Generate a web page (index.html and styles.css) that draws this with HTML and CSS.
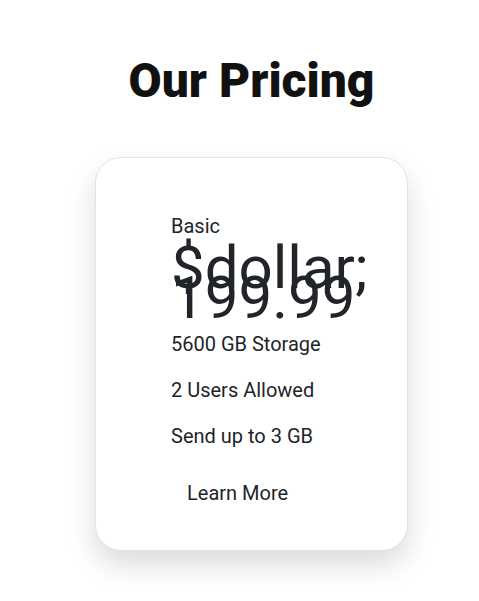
FILE: index.html
```html
<!DOCTYPE html>
<html lang="en">
<head>
<meta charset="utf-8">
<title>Our Pricing</title>
<link rel="stylesheet" href="styles.css">
</head>
<body>
<main class="pricing">
  <h1 class="pricing-title">Our Pricing</h1>
  <div class="plan-card">
    <p class="plan-name">Basic</p>
    <h2 class="plan-price">$dollar; 199.99</h2>
    <p class="plan-feature">5600 GB Storage</p>
    <p class="plan-feature">2 Users Allowed</p>
    <p class="plan-feature">Send up to 3 GB</p>
    <button class="plan-button" type="button">Learn More</button>
  </div>
</main>
</body>
</html>
```
FILE: styles.css
```css
* {
  box-sizing: border-box;
}

body {
  margin: 0;
  background: #ffffff;
  color: #212529;
  font-family: Roboto, "Liberation Sans", sans-serif;
  font-size: 20px;
  line-height: 1.5;
}

.pricing {
  display: flex;
  flex-direction: column;
  align-items: center;
  padding: 52px 0 40px 24px;
}

.pricing-title {
  margin: 0 0 47px;
  font-size: 48px;
  font-weight: 900;
  line-height: 1.2;
  color: #111111;
}

.plan-card {
  width: 313px;
  padding: 53px 20px 31px 75px;
  background: #ffffff;
  border: 1px solid #e2e2e2;
  border-radius: 26px;
  box-shadow: 0 14px 28px rgba(0, 0, 0, 0.14);
}

.plan-name {
  margin: 0 0 12px;
}

.plan-price {
  margin: 0 0 16px;
  font-size: 60px;
  font-weight: 400;
  line-height: 30px;
}

.plan-feature {
  margin: 0 0 16px;
}

.plan-button {
  padding: 11px 16px;
  border: none;
  background: transparent;
  color: #212529;
  font: inherit;
  cursor: pointer;
}
```
